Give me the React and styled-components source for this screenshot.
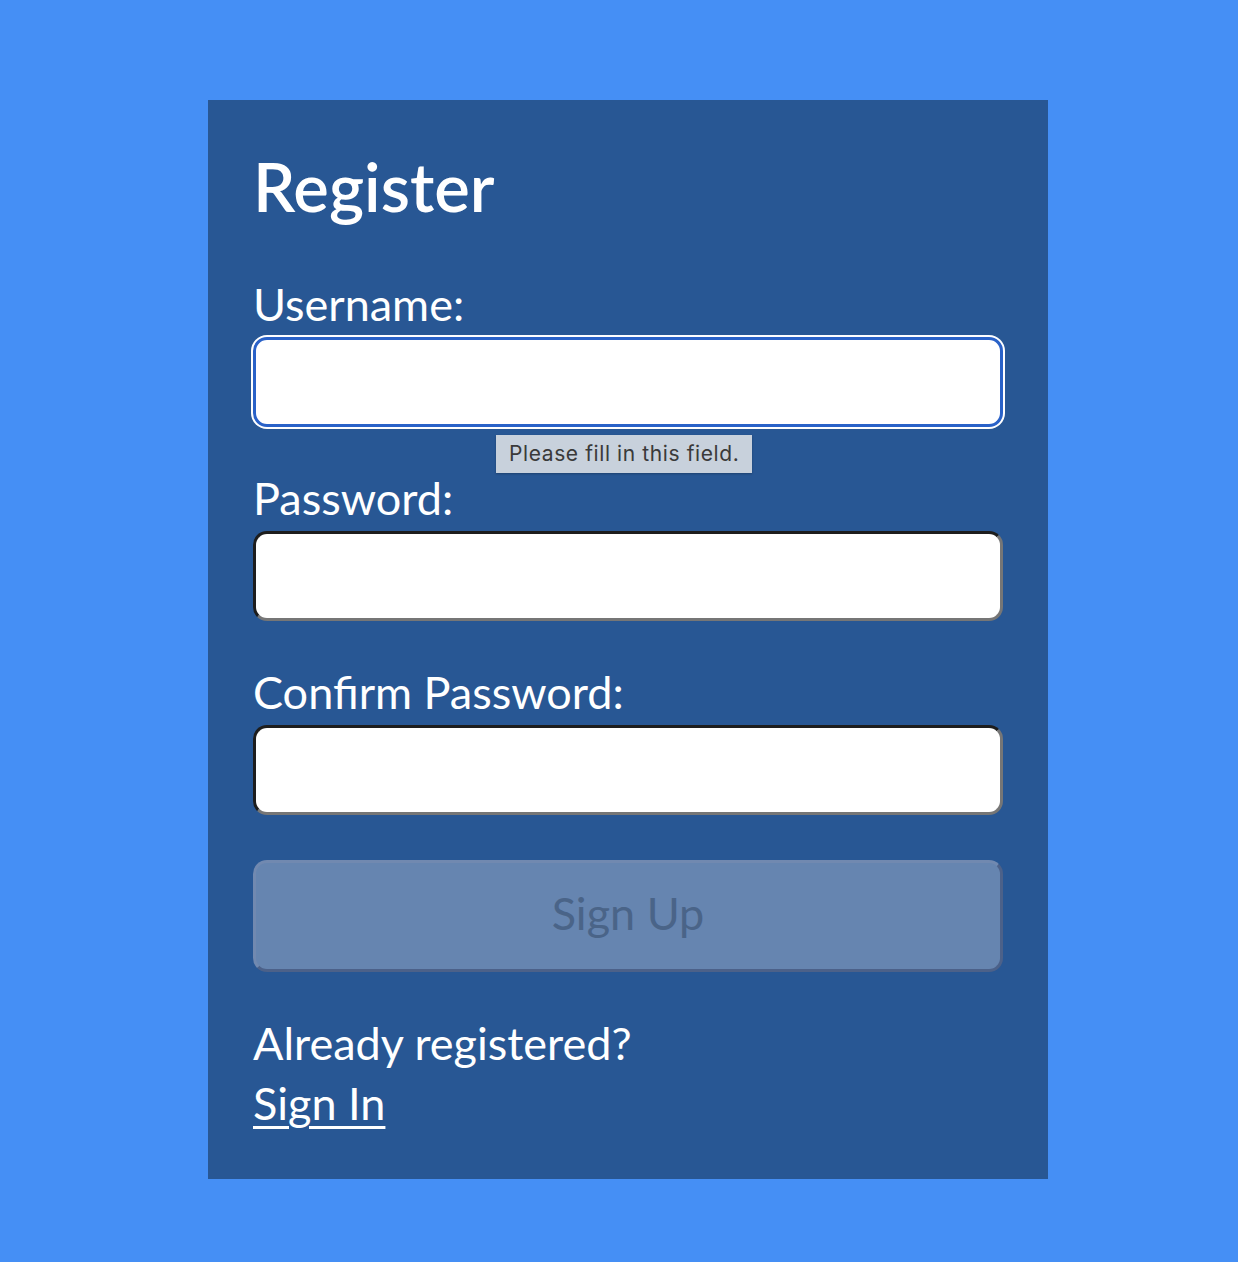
import React from "react";
import styled, { createGlobalStyle } from "styled-components";

const GlobalStyle = createGlobalStyle`
  html, body { margin: 0; padding: 0; }
  body {
    background: #458ff5;
    font-family: Lato, "Noto Sans", sans-serif;
    min-height: 1262px;
  }
`;

const Page = styled.div`
  padding-top: 100px;
  padding-left: 208px;
  padding-bottom: 82px;
`;

const Card = styled.section`
  width: 840px;
  box-sizing: border-box;
  background: #285794;
  padding: 47px 45px 46px 45px;
  color: #ffffff;
`;

const Title = styled.h1`
  margin: 0 0 51px 0;
  font-size: 67px;
  line-height: 79px;
  font-weight: 600;
`;

const Form = styled.form`
  display: flex;
  flex-direction: column;
`;

const Field = styled.div`
  position: relative;
  display: flex;
  flex-direction: column;
  margin-bottom: ${(p) => p.$gap}px;
`;

const Label = styled.label`
  font-size: 45px;
  line-height: 54px;
  margin-bottom: 6px;
`;

const Input = styled.input`
  box-sizing: border-box;
  width: 750px;
  height: 90px;
  border-radius: 14px;
  border: 3px solid;
  border-color: ${(p) =>
    p.$focused ? "#2a62c8" : "#1d1d1d #767676 #767676 #1d1d1d"};
  box-shadow: ${(p) => (p.$focused ? "0 0 0 2px #ffffff" : "none")};
  background: #ffffff;
  outline: none;
  font-size: 32px;
  padding: 0 16px;
`;

const Tooltip = styled.div`
  position: absolute;
  left: 243px;
  top: 158px;
  height: 38px;
  box-sizing: border-box;
  padding: 0 13px;
  background: #c8d1dc;
  color: #3a3a3a;
  font-family: Inter, "Liberation Sans", sans-serif;
  font-size: 21px;
  letter-spacing: 0.6px;
  line-height: 38px;
  white-space: nowrap;
  box-shadow: 0 1px 2px rgba(0, 0, 0, 0.25);
`;

const Button = styled.button`
  box-sizing: border-box;
  width: 750px;
  height: 112px;
  border-radius: 14px;
  border: 3px solid;
  border-color: #7189b0 #4c6189 #4c6189 #7189b0;
  background: #6685b0;
  color: #4a6488;
  font-family: Lato, "Noto Sans", sans-serif;
  font-size: 45px;
  padding: 0 0 6px 0;
  margin-bottom: 41px;
  cursor: default;
`;

const Footer = styled.p`
  margin: 0;
  font-size: 45px;
  line-height: 60px;
`;

const Link = styled.a`
  display: inline-block;
  color: #ffffff;
  text-decoration: underline;
  text-decoration-thickness: 3px;
  text-underline-offset: 6px;
`;

export default function App() {
  return (
    <>
      <GlobalStyle />
      <Page>
        <Card>
          <Title>Register</Title>
          <Form onSubmit={(e) => e.preventDefault()}>
            <Field $gap={44}>
              <Label htmlFor="username">Username:</Label>
              <Input id="username" type="text" $focused />
              <Tooltip>Please fill in this field.</Tooltip>
            </Field>
            <Field $gap={44}>
              <Label htmlFor="password">Password:</Label>
              <Input id="password" type="password" />
            </Field>
            <Field $gap={45}>
              <Label htmlFor="confirm">Confirm Password:</Label>
              <Input id="confirm" type="password" />
            </Field>
            <Button type="submit" disabled>
              Sign Up
            </Button>
          </Form>
          <Footer>
            Already registered?
            <br />
            <Link href="#">Sign In</Link>
          </Footer>
        </Card>
      </Page>
    </>
  );
}
